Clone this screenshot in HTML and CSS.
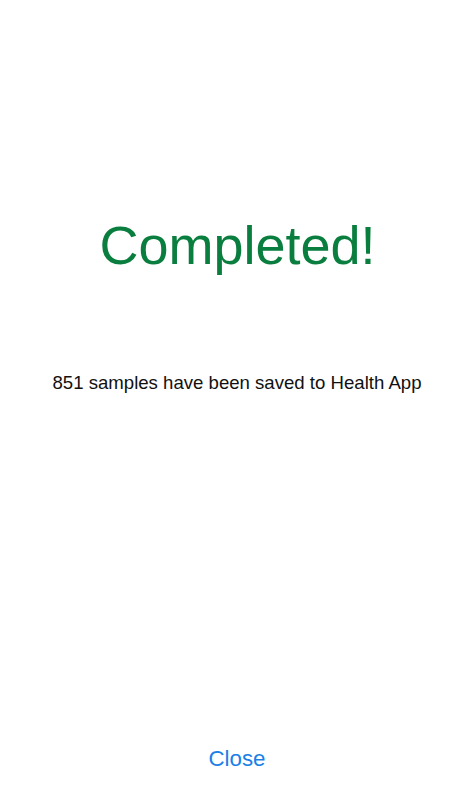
FILE: index.html
```html
<!DOCTYPE html>
<html lang="en">
<head>
<meta charset="utf-8">
<title>Completed</title>
<link rel="stylesheet" href="styles.css">
</head>
<body>
<main class="screen">
  <h1 class="title">Completed!</h1>
  <p class="message">851 samples have been saved to Health App</p>
  <button class="close" type="button">Close</button>
</main>
</body>
</html>
```
FILE: styles.css
```css
html, body {
  margin: 0;
  padding: 0;
  background: #ffffff;
}
.screen {
  height: 811px;
  box-sizing: border-box;
  display: flex;
  flex-direction: column;
  align-items: center;
  padding: 213px 0 39px;
  font-family: "Liberation Sans", Arial, sans-serif;
}
.title {
  margin: 0;
  font-size: 54px;
  line-height: 64px;
  font-weight: normal;
  color: #0a7e3e;
  padding-left: 1px;
}
.message {
  margin: 95px 0 0;
  font-size: 18.6px;
  line-height: 22px;
  color: #111111;
}
.close {
  margin-top: auto;
  border: 0;
  background: none;
  padding: 0;
  font-family: inherit;
  font-size: 22.3px;
  line-height: 26px;
  color: #1a7fe6;
  cursor: pointer;
}
```
